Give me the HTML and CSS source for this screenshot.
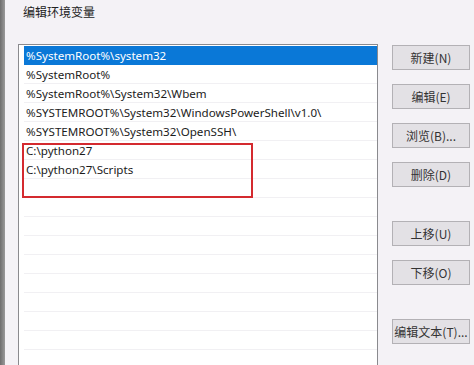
FILE: index.html
```html
<!DOCTYPE html>
<html lang="zh-CN">
<head>
<meta charset="utf-8">
<title>编辑环境变量</title>
<link rel="stylesheet" href="styles.css">
</head>
<body>
<div class="window">
  <div class="strip"></div>
  <div class="dialog">
    <div class="title">编辑环境变量</div>
    <div class="content">
      <div class="list">
        <div class="row selected">%SystemRoot%\system32</div>
        <div class="row">%SystemRoot%</div>
        <div class="row">%SystemRoot%\System32\Wbem</div>
        <div class="row">%SYSTEMROOT%\System32\WindowsPowerShell\v1.0\</div>
        <div class="row">%SYSTEMROOT%\System32\OpenSSH\</div>
        <div class="row">C:\python27</div>
        <div class="row">C:\python27\Scripts</div>
        <div class="row"></div>
        <div class="row"></div>
        <div class="row"></div>
        <div class="row"></div>
        <div class="row"></div>
        <div class="row"></div>
        <div class="row"></div>
        <div class="row"></div>
        <div class="row"></div>
        <div class="row"></div>
        <div class="highlight"></div>
      </div>
      <div class="buttons">
        <button class="btn">新建(N)</button>
        <button class="btn">编辑(E)</button>
        <button class="btn">浏览(B)...</button>
        <button class="btn">删除(D)</button>
        <button class="btn group">上移(U)</button>
        <button class="btn">下移(O)</button>
        <button class="btn group">编辑文本(T)...</button>
      </div>
    </div>
  </div>
</div>
</body>
</html>
```

FILE: styles.css
```css
html, body {
  margin: 0;
  padding: 0;
  background: #f4f2f6;
  overflow: hidden;
}

.window {
  display: flex;
  width: 474px;
  height: 365px;
  font-family: "Noto Sans", "Noto Sans CJK SC", sans-serif;
  color: #1c1c1c;
}

.strip {
  width: 5px;
  flex: none;
  background: linear-gradient(to right, #6e6e6e, #9a9a9a);
}

.dialog {
  flex: 1;
  display: flex;
  flex-direction: column;
  padding-left: 13px;
}

.title {
  height: 44px;
  box-sizing: border-box;
  padding: 3px 0 0 5px;
  font-family: "Noto Sans CJK SC", sans-serif;
  font-size: 12px;
  line-height: 18px;
  color: #222;
}

.content {
  flex: 1;
  display: flex;
  min-height: 0;
}

.list {
  position: relative;
  width: 360px;
  box-sizing: border-box;
  border: 1px solid #8a8a8e;
  border-bottom: none;
  background: #ffffff;
  padding: 1px 0 0 5px;
  overflow: hidden;
}

.row {
  height: 19px;
  box-sizing: border-box;
  border-bottom: 1px solid #f1f0f3;
  padding-left: 2px;
  font-size: 11.6px;
  line-height: 20px;
  white-space: nowrap;
  color: #1c1c1c;
}

.row.selected {
  background: #0a78d7;
  color: #ffffff;
  border-bottom-color: #0a78d7;
}

.highlight {
  position: absolute;
  left: 3px;
  top: 98px;
  width: 231px;
  height: 55px;
  box-sizing: border-box;
  border: 2px solid #d42a2f;
}

.buttons {
  display: flex;
  flex-direction: column;
  gap: 14px;
  margin-left: 14px;
  padding-top: 1px;
}

.btn {
  width: 78px;
  height: 25px;
  box-sizing: border-box;
  border: 1px solid #b3b1b5;
  background: #e3e1e5;
  font-family: "Noto Sans CJK SC", sans-serif;
  font-size: 12px;
  color: #333;
  padding: 0;
  white-space: nowrap;
}

.btn.group {
  margin-top: 20px;
}
```
